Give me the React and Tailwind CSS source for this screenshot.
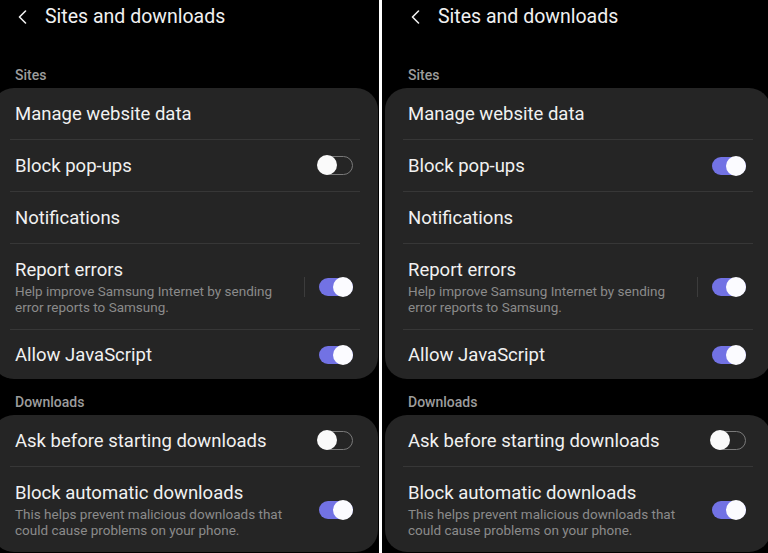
import React from "react";

function Toggle({ on }) {
  return on ? (
    <div className="relative w-[34px] h-[18px] rounded-full bg-[#7272e4] shrink-0">
      <div className="absolute right-0 top-[-1px] w-[20px] h-[20px] rounded-full bg-[#fbfbff]" />
    </div>
  ) : (
    <div className="relative w-[35px] h-[19px] rounded-full border-[1.5px] border-[#7a7a7a] shrink-0">
      <div className="absolute left-[-2.5px] top-[-2px] w-[20px] h-[20px] rounded-full bg-[#fafafa]" />
    </div>
  );
}

function Sep() {
  return <div className="mx-[18px] h-px bg-[#373737]" />;
}

function Row({ title, sub, toggle, divider, h }) {
  return (
    <div className={"flex items-center pl-[23px] pr-[25px] " + h}>
      <div className="flex-1 min-w-0 pt-[1px]">
        <div className="text-[18.5px] leading-[22px] text-[#f1f1f1]">{title}</div>
        {sub && (
          <div className="mt-[2px] text-[13.5px] leading-[16px] text-[#8b8b8b]">{sub}</div>
        )}
      </div>
      {divider && <div className="w-px h-[20px] bg-[#3c3c3c] mr-[14px]" />}
      {toggle !== undefined && <Toggle on={toggle} />}
    </div>
  );
}

function Panel({ popups }) {
  return (
    <div className="w-[386px] shrink-0 font-[family-name:Roboto,sans-serif]">
      <div className="h-[33px] flex items-center pl-[26px]">
        <svg width="9" height="14" viewBox="0 0 9 14" fill="none">
          <polyline points="7.5,1 1.5,7 7.5,13" stroke="#f0f0f0" strokeWidth="1.6" strokeLinecap="round" strokeLinejoin="round" />
        </svg>
        <div className="ml-[18px] text-[19.5px] leading-[24px] text-[#f1f1f1]">Sites and downloads</div>
      </div>
      <div className="mt-[34px] pl-[23px] text-[14px] leading-[16px] font-medium text-[#9c9c9c]">Sites</div>
      <div className="mt-[5px] bg-[#252525] rounded-[22px]">
        <Row title="Manage website data" h="h-[51px]" />
        <Sep />
        <Row title="Block pop-ups" toggle={popups} h="h-[51px]" />
        <Sep />
        <Row title="Notifications" h="h-[51px]" />
        <Sep />
        <Row
          title="Report errors"
          sub={<>Help improve Samsung Internet by sending<br />error reports to Samsung.</>}
          toggle={true}
          divider
          h="h-[85px]"
        />
        <Sep />
        <Row title="Allow JavaScript" toggle={true} h="h-[49px]" />
      </div>
      <div className="mt-[15px] pl-[23px] text-[14px] leading-[16px] font-medium text-[#9c9c9c]">Downloads</div>
      <div className="mt-[5px] bg-[#252525] rounded-[22px] h-[137px]">
        <Row title="Ask before starting downloads" toggle={false} h="h-[51px]" />
        <Sep />
        <Row
          title="Block automatic downloads"
          sub={<>This helps prevent malicious downloads that<br />could cause problems on your phone.</>}
          toggle={true}
          h="h-[85px]"
        />
      </div>
    </div>
  );
}

export default function App() {
  return (
    <div className="w-[768px] h-[553px] bg-black flex overflow-hidden">
      <div className="w-[379px] h-[553px] overflow-hidden shrink-0">
        <div className="ml-[-8px]">
          <Panel popups={false} />
        </div>
      </div>
      <div className="w-[3px] h-[553px] bg-white shrink-0" />
      <div className="w-[386px] h-[553px] overflow-hidden shrink-0 pl-[3px]">
        <Panel popups={true} />
      </div>
    </div>
  );
}
